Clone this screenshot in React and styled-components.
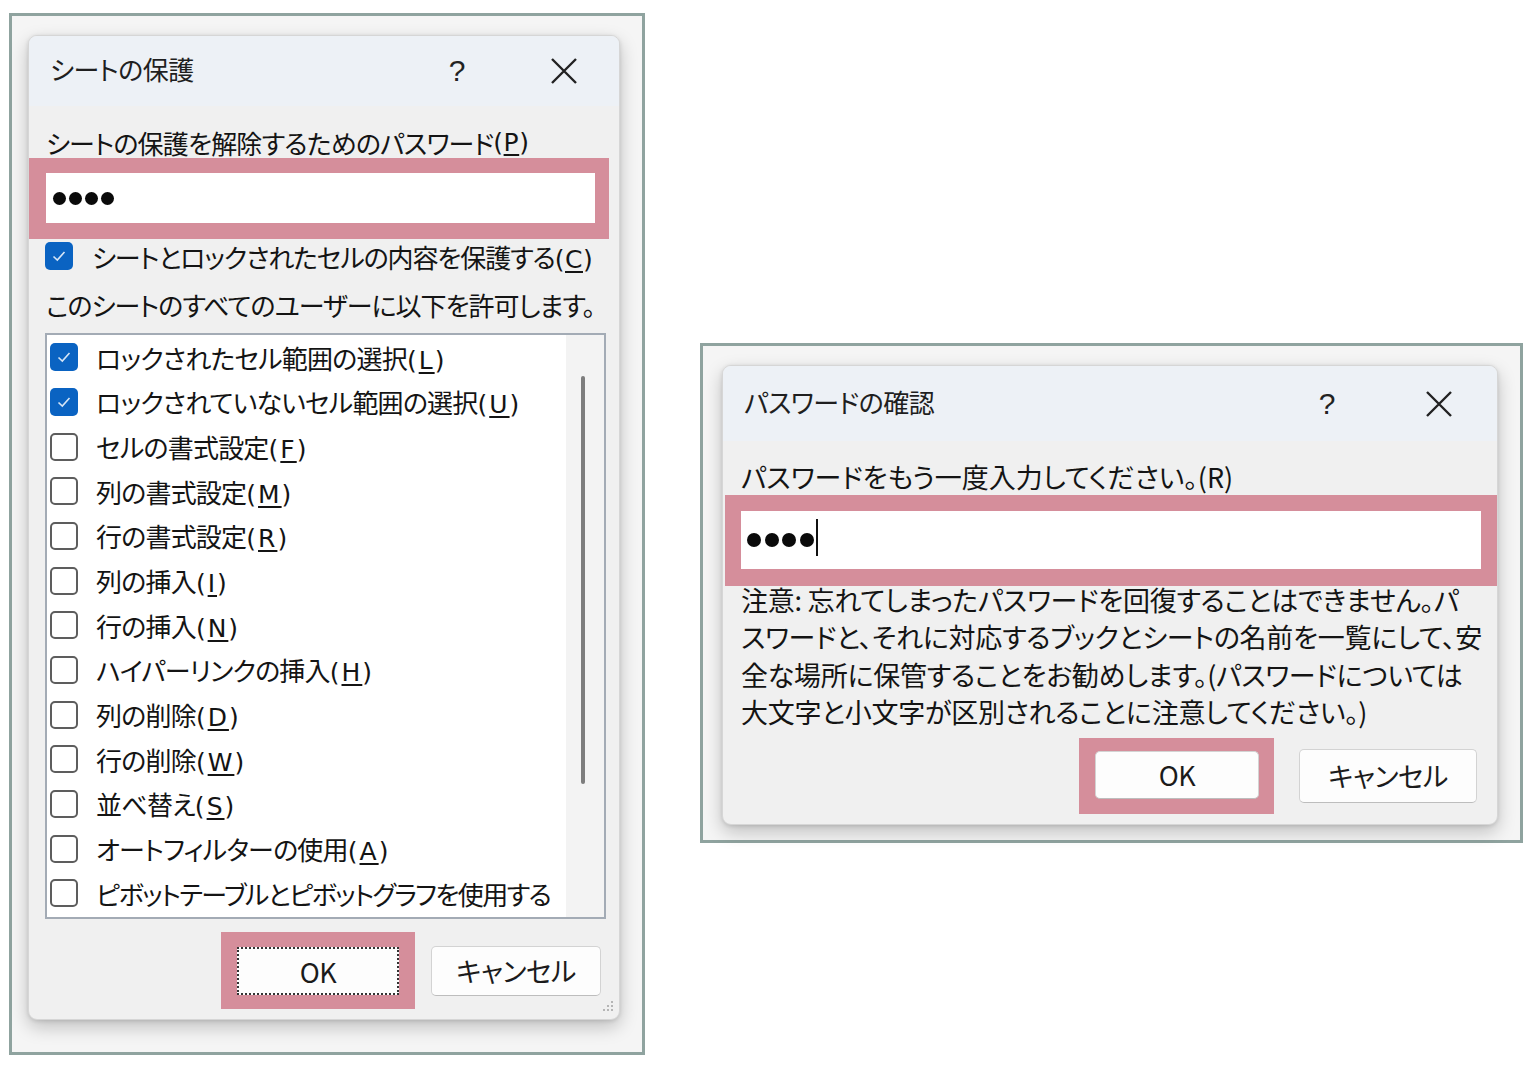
import React from 'react'
import styled, { createGlobalStyle } from 'styled-components'

const GlobalStyle = createGlobalStyle`
  html, body {
    margin: 0;
    padding: 0;
    background: #ffffff;
  }
  body {
    font-family: "Noto Sans CJK JP", "Noto Sans", sans-serif;
    font-feature-settings: "palt";
    color: #141414;
  }
`

const Page = styled.div`
  display: flex;
  align-items: flex-start;
  gap: 55px;
  padding: 13px 0 0 9px;
  width: 1536px;
  height: 1071px;
  box-sizing: border-box;
`

const Frame = styled.div`
  box-sizing: border-box;
  width: ${p => p.w}px;
  height: ${p => p.h}px;
  margin-top: ${p => p.top || 0}px;
  border: 3px solid #8fa39f;
  background: #f5f5f5;
  padding: ${p => p.pad};
`

const Dialog = styled.div`
  position: relative;
  box-sizing: border-box;
  width: ${p => p.w}px;
  height: ${p => p.h}px;
  border-radius: 9px;
  border: 1px solid #d6d6d6;
  background: #f0f0f0;
  box-shadow: 0 7px 18px rgba(0, 0, 0, 0.22), 0 1px 4px rgba(0, 0, 0, 0.12);
  overflow: hidden;
  display: flex;
  flex-direction: column;
`

const TitleBar = styled.div`
  flex: none;
  display: flex;
  align-items: center;
  height: ${p => p.h}px;
  padding: 0 ${p => p.right}px 0 21px;
  background: #edf1f6;
`

const Title = styled.div`
  flex: 1;
  margin-top: -5px;
  font-size: 26px;
  letter-spacing: -0.5px;
  color: #1f1f1f;
`

const Help = styled.div`
  width: 40px;
  margin-right: ${p => p.gap}px;
  text-align: center;
  font-family: "Liberation Sans", sans-serif;
  font-size: 30px;
  color: #222;
`

const Close = styled.div`
  width: 60px;
  display: flex;
  justify-content: center;
`

const Body = styled.div`
  flex: 1;
  display: flex;
  flex-direction: column;
  padding: 0 ${p => p.right}px 0 0;
`

const Label = styled.div`
  display: flex;
  align-items: center;
  height: 30px;
  font-size: ${p => p.size || 26}px;
  letter-spacing: ${p => p.ls ?? -0.6}px;
  white-space: nowrap;
  padding-left: ${p => p.left}px;
  margin-top: ${p => p.top}px;
`

const Highlight = styled.div`
  box-sizing: border-box;
  align-self: ${p => p.align || 'flex-start'};
  margin-left: ${p => p.left || 0}px;
  margin-top: ${p => p.top || 0}px;
  width: ${p => p.w}px;
  padding: ${p => p.pad};
  background: #d58e9b;
  position: relative;
  z-index: 1;
`

const Input = styled.div`
  height: ${p => p.h}px;
  background: #ffffff;
  display: flex;
  align-items: center;
  padding-left: ${p => p.left}px;
  gap: ${p => p.gap}px;
`

const Dot = styled.span`
  width: ${p => p.size}px;
  height: ${p => p.size}px;
  border-radius: 50%;
  background: #0a0a0a;
`

const Caret = styled.span`
  width: 2px;
  height: 37px;
  margin: -5px 0 0 -1px;
  background: #111;
`

const CheckRow = styled.div`
  display: flex;
  align-items: center;
  height: ${p => p.h}px;
  padding-left: ${p => p.left}px;
  gap: ${p => p.gap}px;
  font-size: 26px;
  letter-spacing: ${p => p.ls}px;
  white-space: nowrap;
`

const Box = styled.span`
  flex: none;
  box-sizing: border-box;
  width: 28px;
  height: 28px;
  border-radius: 5px;
  display: flex;
  align-items: center;
  justify-content: center;
  background: ${p => (p.checked ? '#0a63c2' : '#ffffff')};
  border: ${p => (p.checked ? 'none' : '2px solid #5d5d5d')};
`

const KeyText = styled.span`
  font-family: "DejaVu Sans", "Noto Sans", sans-serif;
  font-size: 25px;
  line-height: 1;
  letter-spacing: ${p => p.ls ?? 0.5}px;

  u {
    text-underline-offset: 3px;
  }
`

const ListBox = styled.div`
  position: relative;
  box-sizing: border-box;
  margin: 14px 0 0 16px;
  width: 561px;
  height: 586px;
  border: 2px solid #a3abb5;
  background: #ffffff;
`

const ScrollTrack = styled.div`
  position: absolute;
  top: 0;
  right: 0;
  bottom: 0;
  width: 38px;
  background: #f3f3f3;
`

const ScrollThumb = styled.div`
  position: absolute;
  top: 41px;
  left: 15px;
  width: 4px;
  height: 408px;
  border-radius: 2px;
  background: #7d7d7d;
`

const Buttons = styled.div`
  display: flex;
  justify-content: flex-end;
  align-items: center;
  gap: ${p => p.gap}px;
  margin-top: ${p => p.top}px;
`

const Button = styled.div`
  box-sizing: border-box;
  width: ${p => p.w}px;
  height: ${p => p.h}px;
  display: flex;
  align-items: center;
  justify-content: center;
  background: #fdfdfd;
  border: ${p => (p.focus ? '2px dotted #333' : '1px solid #d3d3d3')};
  border-bottom-color: ${p => (p.focus ? '#333' : '#bdbdbd')};
  border-radius: ${p => (p.focus ? '0' : '5px')};
  font-size: 27px;
  letter-spacing: -0.5px;
  color: #1b1b1b;
`

const Note = styled.div`
  margin-top: -5px;
  padding-left: 18px;
  font-size: 27px;
  line-height: 37.4px;
  letter-spacing: -0.25px;
  white-space: nowrap;
`

const Grip = styled.svg`
  position: absolute;
  right: 4px;
  bottom: 4px;
`

const CloseIcon = () => (
  <svg width="28" height="28" viewBox="0 0 28 28">
    <path d="M2 2 L26 26 M26 2 L2 26" stroke="#222" strokeWidth="2.4" fill="none" />
  </svg>
)

const Check = ({ checked }) => (
  <Box checked={checked}>
    {checked && (
      <svg width="18" height="18" viewBox="0 0 18 18">
        <path d="M3.5 9.5 L7.3 13 L14.5 5" stroke="#d6e5f6" strokeWidth="1.6" fill="none" />
      </svg>
    )}
  </Box>
)

const Key = ({ k, ls }) => (
  <KeyText ls={ls}>
    (<u>{k}</u>)
  </KeyText>
)

const items = [
  { t: 'ロックされたセル範囲の選択', k: 'L', on: true },
  { t: 'ロックされていないセル範囲の選択', k: 'U', on: true },
  { t: 'セルの書式設定', k: 'F' },
  { t: '列の書式設定', k: 'M' },
  { t: '行の書式設定', k: 'R' },
  { t: '列の挿入', k: 'I' },
  { t: '行の挿入', k: 'N' },
  { t: 'ハイパーリンクの挿入', k: 'H' },
  { t: '列の削除', k: 'D' },
  { t: '行の削除', k: 'W' },
  { t: '並べ替え', k: 'S' },
  { t: 'オートフィルターの使用', k: 'A' },
  { t: 'ピボットテーブルとピボットグラフを使用する' },
]

const Dots = ({ size }) => (
  <>
    <Dot size={size} />
    <Dot size={size} />
    <Dot size={size} />
    <Dot size={size} />
  </>
)

const ProtectDialog = () => (
  <Dialog w={592} h={985}>
    <TitleBar h={70} right={25}>
      <Title>シートの保護</Title>
      <Help gap={57}>?</Help>
      <Close>
        <CloseIcon />
      </Close>
    </TitleBar>
    <Body right={18}>
      <Label left={17} top={21} ls={-0.8}>
        シートの保護を解除するためのパスワード<Key k="P" />
      </Label>
      <Highlight w={580} top={1} pad="15px 14px 16px 17px">
        <Input h={50} left={7} gap={3}>
          <Dots size={13} />
        </Input>
      </Highlight>
      <CheckRow h={34} left={16} gap={19} ls={-1.1}>
        <Check checked />
        <span>
          シートとロックされたセルの内容を保護する<Key k="C" />
        </span>
      </CheckRow>
      <Label left={17} top={16} ls={-1}>
        このシートのすべてのユーザーに以下を許可します。
      </Label>
      <ListBox>
        <ScrollTrack>
          <ScrollThumb />
        </ScrollTrack>
        {items.map(it => (
          <CheckRow key={it.t} h={44.67} left={3} gap={18} ls={it.k ? -0.8 : -1.6}>
            <Check checked={it.on} />
            <span>
              {it.t}
              {it.k && <Key k={it.k} ls={2} />}
            </span>
          </CheckRow>
        ))}
      </ListBox>
      <Buttons gap={16} top={13}>
        <Highlight w={194} pad="15px 16px 14px 16px" align="center">
          <Button w={162} h={48} focus>
            OK
          </Button>
        </Highlight>
        <Button w={170} h={50}>
          キャンセル
        </Button>
      </Buttons>
    </Body>
    <Grip width="16" height="16" viewBox="0 0 16 16">
      <g fill="#b5b5b5">
        <rect x="12" y="2" width="2" height="2" />
        <rect x="8" y="6" width="2" height="2" />
        <rect x="12" y="6" width="2" height="2" />
        <rect x="4" y="10" width="2" height="2" />
        <rect x="8" y="10" width="2" height="2" />
        <rect x="12" y="10" width="2" height="2" />
      </g>
    </Grip>
  </Dialog>
)

const ConfirmDialog = () => (
  <Dialog w={776} h={460}>
    <TitleBar h={75} right={28}>
      <Title>パスワードの確認</Title>
      <Help gap={62}>?</Help>
      <Close>
        <CloseIcon />
      </Close>
    </TitleBar>
    <Body right={20}>
      <Label left={18} top={20} size={27} ls={0}>
        パスワードをもう一度入力してください。(R)
      </Label>
      <Highlight w={773} left={2} top={4} pad="16px 17px 17px 16px">
        <Input h={58} left={6} gap={3.5}>
          <Dots size={14} />
          <Caret />
        </Input>
      </Highlight>
      <Note>
        注意: 忘れてしまったパスワードを回復することはできません。パ
        <br />
        スワードと、それに対応するブックとシートの名前を一覧にして、安
        <br />
        全な場所に保管することをお勧めします。(パスワードについては
        <br />
        大文字と小文字が区別されることに注意してください。)
      </Note>
      <Buttons gap={25} top={7}>
        <Highlight w={195} pad="13px 15px 15px 16px" align="center">
          <Button w={164} h={48}>
            OK
          </Button>
        </Highlight>
        <Button w={178} h={54}>
          キャンセル
        </Button>
      </Buttons>
    </Body>
  </Dialog>
)

export default function App() {
  return (
    <>
      <GlobalStyle />
      <Page>
        <Frame w={636} h={1042} pad="19px 0 0 16px">
          <ProtectDialog />
        </Frame>
        <Frame w={823} h={500} top={330} pad="19px 0 0 19px">
          <ConfirmDialog />
        </Frame>
      </Page>
    </>
  )
}
